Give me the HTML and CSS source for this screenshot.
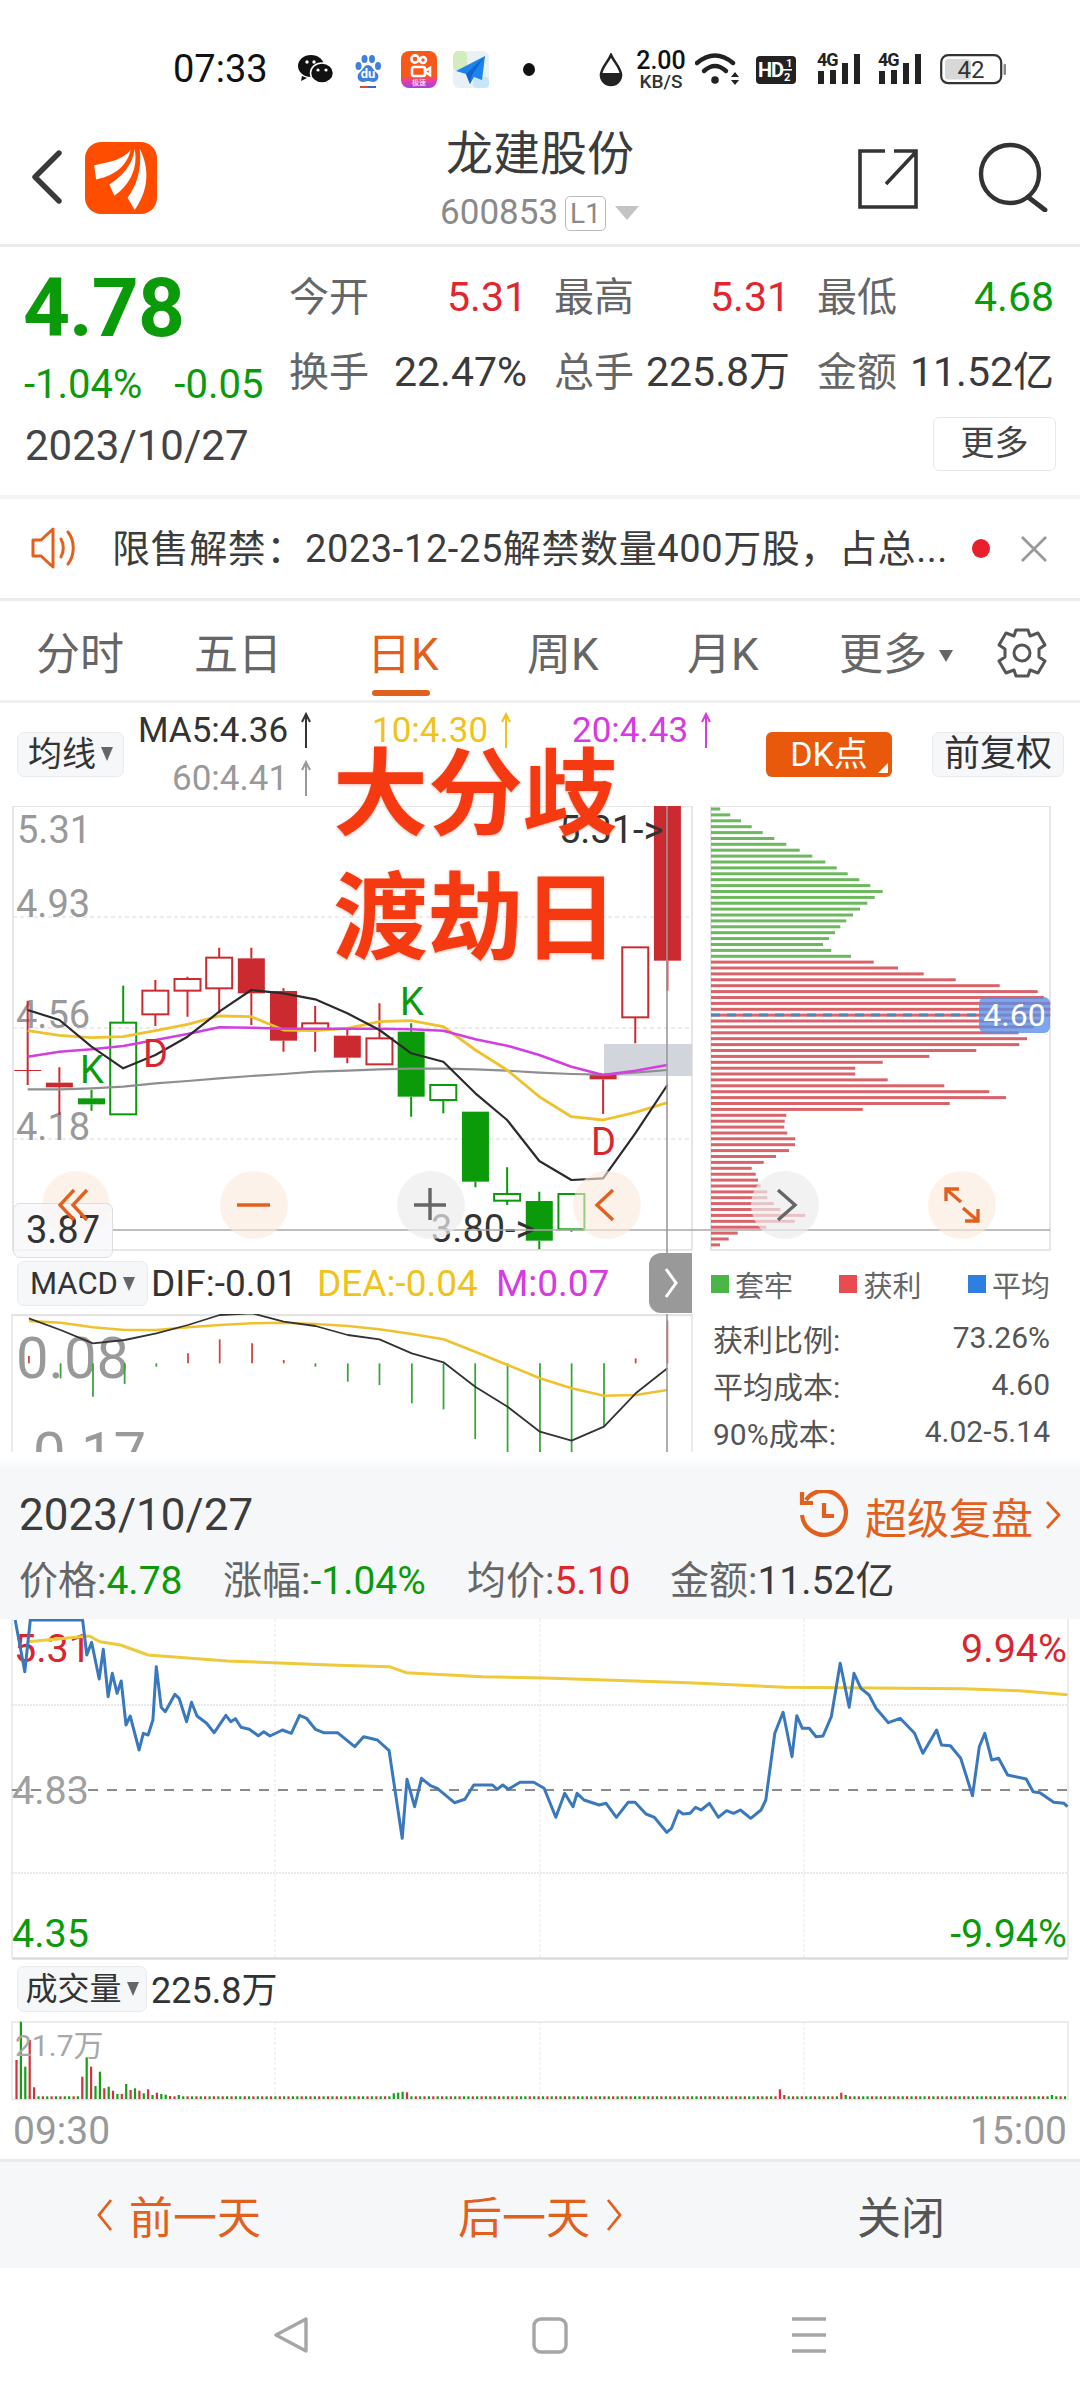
FILE: index.html
```html
<!DOCTYPE html>
<html lang="zh-CN">
<head>
  <meta charset="UTF-8">
  <title>龙建股份 600853</title>
  <link rel="stylesheet" href="styles.css">
</head>
<body>
<div id="page">

  <div class="status">
    <span class="st-time">07:33</span>
    <svg class="st-wechat" width="35" height="29" viewBox="0 0 35 29">
      <path d="M4 21l-1 5 6-3z M25 25l5 3-1-5z"/>
      <ellipse cx="13" cy="11" rx="13" ry="11"/>
      <ellipse cx="24" cy="18" rx="11.5" ry="10" stroke="#fff" stroke-width="1.5"/>
      <circle cx="9" cy="7" r="1.7" fill="#fff"/><circle cx="16" cy="7" r="1.7" fill="#fff"/>
      <circle cx="20" cy="15" r="1.6" fill="#fff"/><circle cx="28" cy="15" r="1.6" fill="#fff"/>
    </svg>
    <svg class="st-baidu" width="26" height="34" viewBox="0 0 26 34">
      <g fill="#3f7fdd">
        <ellipse cx="3.5" cy="11" rx="3" ry="4"/><ellipse cx="9.5" cy="4" rx="3" ry="4"/>
        <ellipse cx="17" cy="4" rx="3" ry="4"/><ellipse cx="23" cy="11" rx="3" ry="4"/>
        <path d="M13 10c4 0 5 5 9 8 3 3 1 9-4 9-2 0-3-1-5-1s-3 1-5 1c-5 0-7-6-4-9 4-3 5-8 9-8z"/>
      </g>
      <text x="13" y="23" class="ic-du">du</text>
      <rect x="5" y="31" width="8" height="2" fill="#d8483c"/><rect x="13" y="31" width="8" height="2" fill="#3a66c8"/>
    </svg>
    <svg class="st-app" width="36" height="37" viewBox="0 0 36 37">
      <defs><linearGradient id="appGrad" x1="0" y1="0" x2="0" y2="1">
        <stop offset=".68" stop-color="#f9581b"/><stop offset=".8" stop-color="#e83fa0"/><stop offset="1" stop-color="#9a45e8"/>
      </linearGradient></defs>
      <rect width="36" height="37" rx="8" fill="url(#appGrad)"/>
      <g fill="none" stroke="#fff" stroke-width="2.6">
        <circle cx="14" cy="8" r="3.6"/><circle cx="22" cy="9" r="3"/>
        <rect x="11" y="16" width="13" height="9" rx="2"/>
        <path d="M24 20l5-3v7l-5-3"/>
      </g>
      <text x="18" y="34" class="ic-app">极速</text>
    </svg>
    <svg class="st-send" width="36" height="37" viewBox="0 0 36 37">
      <rect width="36" height="37" rx="6" fill="#eaf1f6"/>
      <rect width="14" height="20" rx="5" fill="#d3ecbd"/>
      <rect x="20" y="26" width="16" height="11" rx="4" fill="#c5e6f8"/>
      <path d="M32 5L3 20l10 3 4 10 4-7 8 3z" fill="#1d83ee"/>
      <path d="M32 5L13 23l4 10 2-9z" fill="#0f67cf"/>
    </svg>
    <span class="st-dot"></span>
    <svg class="st-drop" width="24" height="34" viewBox="0 0 24 34">
      <path d="M12 2C9 9 2 15 2 22a10 10 0 0 0 20 0C22 15 15 9 12 2z" fill="none" stroke="#222" stroke-width="2.6"/>
      <path d="M2 20h20v2a10 10 0 0 1-20 0z" fill="#222"/>
    </svg>
    <div class="st-speed"><span>2.00</span><small>KB/S</small></div>
    <svg class="st-wifi" width="46" height="35" viewBox="0 0 46 35">
      <g fill="none" stroke="#222" stroke-width="4.4" stroke-linecap="round">
        <path d="M2 11Q20-4 38 11"/><path d="M9 19Q20 9 31 19"/>
      </g>
      <circle cx="20" cy="28" r="3.8" fill="#222"/>
      <path d="M40 20l-4 5h8zM36 28h8l-4 5z" fill="#222"/>
    </svg>
    <svg class="st-hd" width="40" height="28" viewBox="0 0 40 28">
      <rect width="40" height="28" rx="4" fill="#222"/>
      <text x="2" y="21" class="ic-hd">HD</text>
      <text x="30" y="11" class="ic-hd-s">1</text>
      <rect x="27" y="13" width="9" height="1.6" fill="#fff"/>
      <text x="28" y="25" class="ic-hd-s">2</text>
    </svg>
    <svg class="st-net" width="44" height="38" viewBox="0 -6 44 38">
      <text x="0" y="13" class="ic-4g">4G</text>
      <rect x="1" y="18" width="6" height="13"/><rect x="13" y="17" width="6" height="14"/>
      <rect x="25" y="10" width="6" height="21"/><rect x="37" y="1" width="6" height="30"/>
    </svg>
    <svg class="st-net st-net2" width="44" height="38" viewBox="0 -6 44 38">
      <text x="0" y="13" class="ic-4g">4G</text>
      <rect x="1" y="18" width="6" height="13"/><rect x="13" y="17" width="6" height="14"/>
      <rect x="25" y="10" width="6" height="21"/><rect x="37" y="1" width="6" height="30"/>
    </svg>
    <svg class="st-batt" width="66" height="31" viewBox="0 0 66 31">
      <rect x="1.2" y="1.2" width="60" height="28" rx="7" fill="none" stroke="#333" stroke-width="2.2"/>
      <rect x="5" y="5" width="26" height="20.5" rx="3.5" fill="#d8d8d8"/>
      <rect x="63.5" y="10" width="2.5" height="11" rx="1" fill="#888"/>
      <text x="31" y="24" class="ic-batt">42</text>
    </svg>
  </div>

  <header class="head">
    <svg class="back" width="32" height="54" viewBox="0 0 32 54">
      <path d="M28 3L4 27l24 24" fill="none" stroke="#3a3a3a" stroke-width="5.4" stroke-linecap="round" stroke-linejoin="round"/>
    </svg>
    <svg class="logo" width="72" height="72" viewBox="0 0 71 71">
      <rect width="71" height="71" rx="16" fill="#ff4d00"/>
      <path d="M45 8C38 17 25 20 9 23l2 14c15-3 30-11 34-29z M49 7c-2 15-11 26-25 35l5 11C42 44 53 28 49 7z M54 7c2 18-2 35-12 48l7 12C60 52 66 30 54 7z" fill="#fff"/>
    </svg>
    <div class="head-title">
      <div class="stock-name">龙建股份</div>
      <div class="stock-code">600853<span class="lv">L1</span><i class="tri tri-code"></i></div>
    </div>
    <svg class="share" width="60" height="60" viewBox="0 0 60 60">
      <path d="M27 2H2v56h56V23" fill="none" stroke="#333" stroke-width="3.6"/>
      <path d="M28 35L57 4M36 2h22v21" fill="none" stroke="#333" stroke-width="3.6"/>
    </svg>
    <svg class="search" width="70" height="70" viewBox="0 0 70 70">
      <circle cx="32" cy="32" r="29" fill="none" stroke="#333" stroke-width="4.4"/>
      <path d="M50 55l17 13" stroke="#333" stroke-width="4.8" stroke-linecap="round"/>
    </svg>
  </header>

  <section class="quote">
    <div class="quote-left">
      <div class="price green">4.78</div>
      <div class="change green"><span>-1.04%</span><span>-0.05</span></div>
      <div class="q-date">2023/10/27</div>
    </div>
    <div class="quote-right">
      <div class="stat-grid">
        <div class="cell"><span class="lab">今开</span><span class="red">5.31</span></div>
        <div class="cell"><span class="lab">最高</span><span class="red">5.31</span></div>
        <div class="cell"><span class="lab">最低</span><span class="green">4.68</span></div>
        <div class="cell"><span class="lab">换手</span><span class="val">22.47%</span></div>
        <div class="cell"><span class="lab">总手</span><span class="val">225.8万</span></div>
        <div class="cell"><span class="lab">金额</span><span class="val">11.52亿</span></div>
      </div>
      <div class="more-btn">更多</div>
    </div>
  </section>

  <section class="notice">
    <svg class="speaker" width="48" height="42" viewBox="0 0 48 42">
      <g fill="none" stroke="#e2601e" stroke-width="3" stroke-linejoin="round" stroke-linecap="round">
        <path d="M2 13h8L22 2v38L10 29H2z"/>
        <path d="M30 12c3 5 3 13 0 18"/>
        <path d="M37 5c7 9 7 23 0 32"/>
      </g>
    </svg>
    <div class="notice-text">限售解禁：2023-12-25解禁数量400万股，占总...</div>
    <span class="notice-dot"></span>
    <svg class="notice-x" width="28" height="28" viewBox="0 0 28 28">
      <path d="M2 2l24 24M26 2L2 26" stroke="#9a9a9a" stroke-width="2.8"/>
    </svg>
  </section>

  <nav class="tabs">
    <div class="tab">分时</div>
    <div class="tab">五日</div>
    <div class="tab on">日K</div>
    <div class="tab">周K</div>
    <div class="tab">月K</div>
    <div class="tab">更多<i class="tri tri-tab"></i></div>
    <svg class="gear" width="50" height="50" viewBox="0 0 50 50">
      <path d="M19 2h12l2 6 8-3 7 12-6 4v8l6 4-7 12-8-3-2 6H19l-2-6-8 3-7-12 6-4v-8l-6-4L9 5l8 3z" fill="none" stroke="#555" stroke-width="3" stroke-linejoin="round"/>
      <circle cx="25" cy="25" r="8" fill="none" stroke="#555" stroke-width="3"/>
    </svg>
  </nav>

  <div class="kbar">
    <div class="tool-btn btn-ma">均线<i class="tri tri-btn"></i></div>
    <div class="ma-grid">
      <div class="ma c-dark">MA5:4.36<svg class="up" width="12" height="36" viewBox="0 0 12 36"><path d="M6 36V3M2 10l4-8 4 8" fill="none" stroke="currentColor" stroke-width="2"/></svg></div>
      <div class="ma c-yellow">10:4.30<svg class="up" width="12" height="36" viewBox="0 0 12 36"><path d="M6 36V3M2 10l4-8 4 8" fill="none" stroke="currentColor" stroke-width="2"/></svg></div>
      <div class="ma c-pink">20:4.43<svg class="up" width="12" height="36" viewBox="0 0 12 36"><path d="M6 36V3M2 10l4-8 4 8" fill="none" stroke="currentColor" stroke-width="2"/></svg></div>
      <div class="ma c-gray ma-60">60:4.41<svg class="up" width="12" height="36" viewBox="0 0 12 36"><path d="M6 36V3M2 10l4-8 4 8" fill="none" stroke="currentColor" stroke-width="2"/></svg></div>
    </div>
    <div class="dk-btn">DK点<i class="dk-corner"></i></div>
    <div class="tool-btn btn-fq">前复权</div>
  </div>

  <section class="kline">
    <svg id="klineSvg" width="1080" height="447" viewBox="0 806 1080 447">
      <g class="frame">
        <rect x="13" y="806" width="679" height="444"/>
        <rect x="711" y="806" width="339" height="444"/>
      </g>
      <g class="dash-grid">
        <path d="M13 917H692M13 1028H692M13 1139H692"/>
      </g>
      <rect x="604" y="1044" width="88" height="32" fill="#d2d6dc"/>
      <g class="axis-txt">
        <text x="17" y="843">5.31</text>
        <text x="16" y="917">4.93</text>
        <text x="16" y="1028">4.56</text>
        <text x="16" y="1140">4.18</text>
      </g>
      <g id="profile"></g>
      <g id="candles"></g>
      <g id="maLines"></g>
      <g class="kd green-f">
        <text x="80" y="1083">K</text>
        <text x="400" y="1015">K</text>
      </g>
      <g class="kd red-f">
        <text x="143" y="1067">D</text>
        <text x="591" y="1155">D</text>
      </g>
      <text x="559" y="843" class="peak">5.31-&gt;</text>
      <text x="431" y="1242" class="peak">3.80-&gt;</text>
      <path d="M113 1230H1050" stroke="#a8a8a8" stroke-width="1.6"/>
      <path d="M667 806V1253" stroke="#999" stroke-width="1.6"/>
      <rect x="979" y="997" width="71" height="36" rx="6" fill="#5a8ee6" fill-opacity=".78"/>
      <text x="1014.5" y="1026" class="avg-tag">4.60</text>
      <g>
        <circle cx="76" cy="1205" r="34" class="ctl-o"/>
        <circle cx="254" cy="1205" r="34" class="ctl-o"/>
        <circle cx="431" cy="1205" r="34" class="ctl-g"/>
        <circle cx="607" cy="1205" r="34" class="ctl-o"/>
        <circle cx="785" cy="1205" r="34" class="ctl-g"/>
        <circle cx="962" cy="1205" r="34" class="ctl-o"/>
        <path d="M237 1205h33" class="ctl-i"/>
        <path d="M414 1205h32M430 1188v32" class="ctl-i gr"/>
        <path d="M613 1190l-16 15 16 15" class="ctl-i"/>
        <path d="M778 1190l17 15-17 15" class="ctl-i gr"/>
        <path d="M946 1201v-12h13M946 1189l15 13M978 1209v12h-13M978 1221l-15-13" class="ctl-i"/>
      </g>
    </svg>
    <div class="cross-tag">3.87</div>
    <svg class="rew-icon" width="32" height="36" viewBox="0 0 32 36">
      <path d="M16 3L2 18l14 15M29 3L15 18l14 15" class="ctl-i"/>
    </svg>
    <div class="big-title">大分歧<br>渡劫日</div>
  </section>

  <div class="macd-bar">
    <div class="macd-left">
      <div class="tool-btn btn-macd">MACD<i class="tri tri-btn"></i></div>
      <span class="m-val m-dif c-dark">DIF:-0.01</span>
      <span class="m-val m-dea c-yellow">DEA:-0.04</span>
      <span class="m-val c-pink">M:0.07</span>
    </div>
    <div class="legend">
      <span class="lg"><i class="sq sq-g"></i>套牢</span>
      <span class="lg"><i class="sq sq-r"></i>获利</span>
      <span class="lg"><i class="sq sq-b"></i>平均</span>
    </div>
    <div class="side-tab">
      <svg width="16" height="34" viewBox="0 0 16 34"><path d="M3 3l10 14L3 31" fill="none" stroke="#fff" stroke-width="3"/></svg>
    </div>
  </div>

  <div class="macd-body">
    <svg id="macdSvg" width="700" height="138" viewBox="0 1314 700 138">
      <path d="M12 1314V1452M692 1314V1452" stroke="#e4e4e4" stroke-width="1.5"/>
      <path d="M12 1315H692" stroke="#e4e4e4" stroke-width="2.5"/>
      <text x="16" y="1378" class="macd-txt">0.08</text>
      <text x="33" y="1473" class="macd-txt">0.17</text>
      <g id="macdPlot"></g>
      <path d="M667 1314V1452" stroke="#999" stroke-width="1.6"/>
    </svg>
    <div class="cost">
      <div class="cost-row"><span>获利比例:</span><span>73.26%</span></div>
      <div class="cost-row"><span>平均成本:</span><span>4.60</span></div>
      <div class="cost-row"><span>90%成本:</span><span>4.02-5.14</span></div>
    </div>
  </div>

  <section class="panel">
    <div class="panel-top">
      <div class="panel-date">2023/10/27</div>
      <div class="replay">
        <svg width="50" height="50" viewBox="0 0 50 50">
          <g fill="none" stroke="#e2601e" stroke-width="4.2">
            <path d="M7 10A22 22 0 1 1 3 25"/>
            <path d="M3 2v11h11"/>
            <path d="M25 13v13h10"/>
          </g>
        </svg>
        <span>超级复盘</span>
        <svg class="replay-arrow" width="18" height="30" viewBox="0 0 18 30"><path d="M3 2l12 13L3 28" fill="none" stroke="#e2601e" stroke-width="2.8"/></svg>
      </div>
    </div>
    <div class="panel-row">
      <span>价格:<b class="green">4.78</b></span>
      <span>涨幅:<b class="green">-1.04%</b></span>
      <span>均价:<b class="red">5.10</b></span>
      <span>金额:<b class="val">11.52亿</b></span>
    </div>
  </section>

  <svg id="dayChart" class="day-chart" width="1080" height="341" viewBox="0 1619 1080 341">
    <path d="M12 1619V1958M1068 1619V1958" stroke="#e6e6e6" stroke-width="1.5"/>
    <path d="M12 1958.5H1068" stroke="#dcdcdc" stroke-width="2.5"/>
    <path d="M12 1705H1068M12 1873H1068" class="dot-h"/>
    <path d="M275 1619V1958M540 1619V1958M804 1619V1958" class="dot-v"/>
    <path d="M12 1790H1068" stroke="#8a8a8a" stroke-width="1.8" stroke-dasharray="10 9"/>
    <g class="day-txt">
      <text x="14" y="1662" class="red-f">5.31</text>
      <text x="1067" y="1662" class="red-f end">9.94%</text>
      <text x="12" y="1804" class="gray-f">4.83</text>
      <text x="12" y="1947" class="green-f">4.35</text>
      <text x="1067" y="1947" class="green-f end">-9.94%</text>
    </g>
    <g id="dayLines"></g>
  </svg>

  <div class="vol-bar">
    <div class="tool-btn btn-vol">成交量<i class="tri tri-btn"></i></div>
    <span class="m-val vol-val c-dark">225.8万</span>
  </div>

  <svg id="volChart" class="vol-chart" width="1080" height="85" viewBox="0 2018 1080 85">
    <rect x="12" y="2022" width="1056" height="77.5" fill="none" stroke="#e6e6e6" stroke-width="1.5"/>
    <path d="M275 2022V2099M540 2022V2099M804 2022V2099" class="dot-v"/>
    <g id="volBars"></g>
    <text x="15" y="2056" class="vol-txt">21.7万</text>
  </svg>

  <div class="time-row"><span>09:30</span><span>15:00</span></div>

  <footer class="foot">
    <div class="foot-btn f-prev">
      <svg width="18" height="34" viewBox="0 0 18 34"><path d="M15 2L3 17l12 15" fill="none" stroke="#e2601e" stroke-width="2.8"/></svg>
      <span>前一天</span>
    </div>
    <div class="foot-btn f-next">
      <span>后一天</span>
      <svg width="18" height="34" viewBox="0 0 18 34"><path d="M3 2l12 15L3 32" fill="none" stroke="#e2601e" stroke-width="2.8"/></svg>
    </div>
    <div class="foot-btn f-close">关闭</div>
  </footer>

  <div class="navbar">
    <svg width="36" height="36" viewBox="0 0 36 36"><path d="M33 2v32L3 18z" fill="none" stroke="#a6a6a6" stroke-width="3.4" stroke-linejoin="round"/></svg>
    <svg width="36" height="37" viewBox="0 0 36 37"><rect x="2" y="2" width="32" height="33" rx="7" fill="none" stroke="#a6a6a6" stroke-width="3.4"/></svg>
    <svg width="36" height="36" viewBox="0 0 36 36"><path d="M1 2h34M1 18h34M1 34h34" stroke="#a6a6a6" stroke-width="3.6"/></svg>
  </div>
</div>
<script src="chart.js"></script>
</body>
</html>
```

FILE: styles.css
```css
* { margin: 0; padding: 0; box-sizing: border-box; }
html, body { width: 1080px; height: 2400px; overflow: hidden; background: #fff; }
body { font-family: Roboto, "Noto Sans CJK SC", sans-serif; color: #333; }
#page { width: 1080px; height: 2400px; display: flex; flex-direction: column; }
svg { display: block; flex: none; }

.green { color: #0a9a0a; }
.red { color: #e0262e; }
.val { color: #3a3a3a; }
.c-dark { color: #333; }
.c-gray { color: #999; }
.c-yellow { color: #f0c31c; }
.c-pink { color: #d63ae0; }
.green-f { fill: #0a9a0a; }
.red-f { fill: #d8262e; }
.gray-f { fill: #a0a0a0; }

.tri { display: inline-block; width: 0; height: 0; border-style: solid; border-color: #888 transparent transparent; }
.tri-code { border-width: 14px 12px 0; border-top-color: #c4c4c4; margin-left: 9px; }
.tri-tab { border-width: 12px 7px 0; border-top-color: #666; margin-left: 12px; vertical-align: 8px; }
.tri-btn { border-width: 14px 6px 0; border-top-color: #666; margin-left: 5px; }

/* status bar */
.status { height: 115px; padding: 46px 0 0 173px; display: flex; align-items: flex-start; flex: none; fill: #111; }
.st-time { font-size: 38px; line-height: 46px; color: #111; width: 94px; white-space: nowrap; }
.st-wechat { margin: 9px 0 0 31px; }
.st-baidu { margin: 9px 0 0 22px; }
.st-app { margin: 5px 0 0 20px; }
.st-send { margin: 5px 0 0 16px; }
.st-dot { width: 12px; height: 13px; border-radius: 50%; background: #111; margin: 17px 0 0 34px; }
.st-drop { margin: 7px 0 0 64px; }
.st-speed { margin: 4px 0 0 14px; width: 48px; display: flex; flex-direction: column; align-items: center; color: #111; }
.st-speed span { font-size: 25px; line-height: 22px; font-weight: 500; }
.st-speed small { font-size: 19px; line-height: 17px; margin-top: 1px; font-weight: 500; color: #333; }
.st-wifi { margin: 6px 0 0 10px; }
.st-hd { margin: 10px 0 0 15px; }
.st-net { margin: 1px 0 0 21px; fill: #222; }
.st-net2 { margin-left: 17px; }
.st-batt { margin: 8px 0 0 18px; }
.ic-du { font: 700 13px Roboto, sans-serif; fill: #fff; text-anchor: middle; }
.ic-app { font: 7px "Noto Sans CJK SC", sans-serif; fill: #fff; text-anchor: middle; }
.ic-hd { font: 700 20px Roboto, sans-serif; fill: #fff; letter-spacing: -1px; }
.ic-hd-s { font: 700 11px Roboto, sans-serif; fill: #fff; }
.ic-4g { font: 700 18px Roboto, sans-serif; fill: #222; letter-spacing: -1px; }
.ic-batt { font: 24px Roboto, sans-serif; fill: #333; text-anchor: middle; }

/* header */
.head { height: 132px; border-bottom: 3px solid #eaeaea; display: flex; flex: none; position: relative; padding: 27px 0 0 31px; }
.back { margin-top: 8px; }
.logo { margin-left: 22px; }
.head-title { position: absolute; left: 0; right: 0; top: 9px; text-align: center; }
.stock-name { font-size: 47px; line-height: 60px; color: #3c3c3c; }
.stock-code { font-size: 35px; line-height: 40px; color: #8a8a8a; margin-top: 9px; display: flex; align-items: center; justify-content: center; padding-right: 1px; }
.lv { border: 1.5px solid #bbb; border-radius: 5px; font-size: 28px; line-height: 33px; padding: 0 4px; margin-left: 7px; color: #8a8a8a; }
.share { margin: 7px 0 0 701px; position: relative; }
.search { margin: 0 0 0 60px; position: relative; }

/* quote */
.quote { height: 248px; display: flex; flex: none; padding-left: 23px; }
.quote-left { width: 266px; flex: none; }
.price { font-size: 82px; line-height: 82px; font-weight: 700; margin-top: 20px; letter-spacing: -1px; }
.change { font-size: 40px; line-height: 40px; display: flex; gap: 32px; margin: 16px 0 0 1px; white-space: nowrap; }
.q-date { font-size: 42px; line-height: 44px; color: #444; margin: 19px 0 0 2px; }
.quote-right { width: 765px; flex: none; }
.stat-grid { display: grid; grid-template-columns: 238px 236px 237px; column-gap: 27px; row-gap: 32px; margin-top: 29px; font-size: 41px; line-height: 43px; }
.cell { display: flex; justify-content: space-between; white-space: nowrap; }
.lab { font-size: 40px; color: #666; }
.more-btn { width: 123px; height: 54px; margin: 23px 0 0 644px; border: 1.5px solid #e8e8e8; border-radius: 6px; font-size: 34px; line-height: 50px; text-align: center; color: #444; }

/* notice */
.notice { height: 106px; border-top: 4px solid #f4f4f4; border-bottom: 3px solid #ebebeb; display: flex; align-items: center; flex: none; padding-left: 31px; }
.notice-text { width: 835px; margin-left: 33px; font-size: 38px; line-height: 50px; letter-spacing: .6px; color: #3c3c3c; white-space: nowrap; overflow: hidden; flex: none; }
.speaker { margin-top: -2px; }
.notice-dot { width: 18px; height: 19px; border-radius: 50%; background: #e8202c; margin-left: 25px; flex: none; }
.notice-x { margin-left: 30px; }

/* period tabs */
.tabs { height: 102px; display: grid; grid-template-columns: 158px 173px 160px 160px 152px 158px 50px; padding: 28px 0 0 36px; flex: none; font-size: 44px; color: #666; border-bottom: 3px solid #f0f0f0; }
.tab { line-height: 52px; position: relative; white-space: nowrap; }
.tab.on { color: #e2601e; }
.tab.on::after { content: ""; position: absolute; left: 5px; top: 61px; width: 58px; height: 6px; border-radius: 3px; background: #e2601e; }
.gear { margin-top: -1px; }

/* kline toolbar */
.kbar { height: 103px; padding-top: 3px; padding-bottom: 4px; display: flex; align-items: center; flex: none; position: relative; }
.tool-btn { background: #f6f7f9; border: 1.5px solid #e8eaee; border-radius: 7px; height: 45px; font-size: 32px; line-height: 41px; color: #333; display: flex; align-items: center; justify-content: center; white-space: nowrap; flex: none; }
.btn-ma { width: 107px; margin-left: 17px; font-size: 34px; }
.ma-grid { display: grid; grid-template-columns: 234px 200px 160px; grid-auto-rows: 48px; margin-left: 14px; width: 628px; flex: none; font-size: 35px; }
.ma { display: flex; align-items: center; white-space: nowrap; }
.ma-60 { padding-left: 34px; }
.up { margin-left: 12px; }
.dk-btn { width: 126px; height: 45px; background: #e8590c; color: #fff; border-radius: 6px; font-size: 34px; line-height: 44px; text-align: center; position: relative; flex: none; }
.dk-corner { position: absolute; right: 4px; bottom: 4px; border-style: solid; border-width: 0 0 10px 10px; border-color: transparent transparent #fff; }
.btn-fq { width: 132px; margin-left: 40px; font-size: 36px; }

/* kline chart */
.kline { height: 447px; position: relative; flex: none; }
.frame rect { fill: none; stroke: #e0e0e0; stroke-width: 1.6; }
.dash-grid path { stroke: #e6e6e6; stroke-width: 1.5; stroke-dasharray: 4 3; fill: none; }
.axis-txt text { font-size: 38px; fill: #999; }
.kd text { font-size: 38px; }
.peak { font-size: 38px; fill: #333; }
.avg-tag { font-size: 32px; fill: #fff; text-anchor: middle; }
.ctl-o { fill: #fbe9dc; fill-opacity: .6; }
.ctl-g { fill: #ececec; fill-opacity: .7; }
.ctl-i { fill: none; stroke: #e2601e; stroke-width: 3.4; }
.ctl-i.gr { stroke: #666; }
.cross-tag { position: absolute; left: 13px; top: 397px; width: 100px; height: 55px; background: rgba(246,247,249,.72); border: 1.5px solid #ddd; border-radius: 7px; font-size: 38px; line-height: 52px; text-align: center; color: #333; }
.rew-icon { position: absolute; left: 58px; top: 381px; }
.big-title { position: absolute; left: 333px; top: -81px; font-family: "Noto Sans CJK SC", sans-serif; font-weight: 700; font-size: 95px; line-height: 124px; color: #f53a12; white-space: nowrap; text-shadow: 0 1px 3px rgba(200,60,20,.35); }

/* macd */
.macd-bar { height: 61px; display: flex; position: relative; flex: none; }
.macd-left { width: 711px; display: flex; align-items: center; padding: 0 0 0 17px; flex: none; }
.btn-macd { width: 131px; font-size: 31px; }
.m-val { font-size: 37px; line-height: 44px; white-space: nowrap; }
.macd-left .m-val { margin-left: 3px; }
.m-dif { width: 163px; }
.m-dea { width: 176px; }
.legend { width: 339px; display: flex; justify-content: space-between; align-items: center; font-size: 29px; color: #666; }
.lg { display: flex; align-items: center; gap: 6px; white-space: nowrap; }
.sq { width: 18px; height: 18px; }
.sq-g { background: #4cb548; }
.sq-r { background: #e84b50; }
.sq-b { background: #2f7fe0; }
.side-tab { position: absolute; left: 649px; top: 0; width: 43px; height: 60px; background: #999; border-radius: 12px 0 0 12px; display: flex; align-items: center; justify-content: center; }
.macd-body { height: 142px; display: flex; flex: none; }
.macd-txt { font-size: 58px; fill: #999; }
.cost { width: 337px; margin-left: 13px; flex: none; }
.cost-row { height: 47px; display: flex; justify-content: space-between; align-items: center; font-size: 30px; color: #555; white-space: nowrap; }

/* lower panel */
.panel { height: 163px; flex: none; background: linear-gradient(#fff, #f6f7f9 14px); padding: 0 18px 0 19px; }
.panel-top { display: flex; justify-content: space-between; align-items: center; height: 76px; margin-top: 21px; }
.panel-date { font-size: 44px; color: #3c3c3c; }
.replay { display: flex; align-items: center; color: #e2601e; font-size: 42px; }
.replay span { margin-left: 16px; }
.replay-arrow { margin-left: 11px; }
.panel-row { display: flex; font-size: 39px; line-height: 44px; color: #666; margin-top: 6px; white-space: nowrap; }
.panel-row b { font-weight: 400; }
.panel-row span:nth-child(1) { width: 204px; }
.panel-row span:nth-child(2) { width: 244px; }
.panel-row span:nth-child(3) { width: 203px; }

.day-chart { flex: none; }
.dot-h { stroke: #e2e2e2; stroke-width: 1.5; stroke-dasharray: 2 1; fill: none; }
.dot-v { stroke: #ebebeb; stroke-width: 1.2; stroke-dasharray: 3 2; fill: none; }
.day-txt text { font-size: 39.5px; }
.day-txt .end { text-anchor: end; }

.vol-bar { height: 58px; display: flex; align-items: center; padding-left: 17px; flex: none; }
.btn-vol { width: 130px; height: 46px; font-size: 32px; margin-right: 4px; }
.vol-val { font-size: 36px; margin-top: 3px; }
.vol-chart { flex: none; }
.vol-txt { font-size: 30px; fill: #a8a8a8; }

.time-row { height: 56px; display: flex; justify-content: space-between; align-items: center; padding: 0 13px; font-size: 39px; color: #999; flex: none; }

.foot { height: 109px; background: #f6f7f9; border-top: 3px solid #eaeaea; display: flex; flex: none; font-size: 44px; color: #e2601e; }
.foot-btn { display: flex; align-items: center; gap: 15px; white-space: nowrap; }
.f-prev { margin-left: 96px; width: 362px; }
.f-next { width: 399px; }
.f-close { color: #555; }

.navbar { height: 132px; display: flex; flex: none; align-items: flex-start; padding: 49px 0 0 273px; gap: 223px; }
```

FILE: chart.js
```js
// trace units from the crops -> page pixels
function kx(z) { return z / 2.24; }
function ky(z) { return 780 + z / 3; }

function line(pts, color, width, fx, fy) {
  var d = pts.map(function (p) { return fx(p[0]).toFixed(1) + ',' + fy(p[1]).toFixed(1); }).join(' ');
  return '<polyline points="' + d + '" fill="none" stroke="' + color + '" stroke-width="' + width + '" stroke-linejoin="round"/>';
}

// candles: x, wick top, wick bottom, body top, body bottom, color, filled
var RED = '#cb2a30', GRN = '#0a9a0a';
var candles = [
  [62, 662, 915, 870, 873, RED, 1], [133, 862, 1005, 908, 922, RED, 1], [205, 930, 992, 955, 973, GRN, 1],
  [276, 617, 1003, 728, 1003, GRN, 0], [348, 600, 738, 632, 703, RED, 0], [420, 590, 710, 597, 632, RED, 0],
  [491, 503, 700, 533, 625, RED, 0], [563, 503, 735, 535, 640, RED, 1], [635, 625, 815, 633, 782, RED, 1],
  [706, 678, 815, 730, 748, RED, 0], [778, 745, 850, 767, 833, RED, 1], [850, 670, 855, 775, 853, RED, 0],
  [921, 730, 1010, 755, 950, GRN, 1], [993, 915, 1000, 915, 960, GRN, 0], [1065, 995, 1222, 995, 1205, GRN, 1],
  [1136, 1162, 1275, 1242, 1262, GRN, 0], [1208, 1235, 1408, 1263, 1382, GRN, 1], [1280, 1240, 1355, 1242, 1348, GRN, 0],
  [1351, 885, 1002, 885, 898, RED, 1], [1423, 502, 790, 502, 712, RED, 0], [1495, 78, 632, 78, 542, RED, 1]
];
var html = '';
candles.forEach(function (c) {
  var x = kx(c[0]), bodyTop = ky(c[3]), bodyBot = ky(c[4]);
  html += '<path d="M' + x + ' ' + ky(c[1]) + 'V' + bodyTop + 'M' + x + ' ' + bodyBot + 'V' + ky(c[2]) + '" stroke="' + c[5] + '" stroke-width="2"/>';
  if (c[6]) {
    html += '<rect x="' + (x - 13.5) + '" y="' + bodyTop + '" width="27" height="' + (bodyBot - bodyTop) + '" fill="' + c[5] + '"/>';
  } else {
    html += '<rect x="' + (x - 13) + '" y="' + bodyTop + '" width="26" height="' + (bodyBot - bodyTop) + '" fill="none" stroke="' + c[5] + '" stroke-width="2"/>';
  }
});
document.getElementById('candles').innerHTML = html;

var xs = [62, 133, 205, 276, 348, 420, 491, 563, 635, 706, 778, 850, 921, 993, 1065, 1136, 1208, 1280, 1351, 1423, 1495];
function zip(ys) { return ys.map(function (y, i) { return [xs[i], y]; }); }
document.getElementById('maLines').innerHTML =
  line(zip([928, 928, 925, 920, 910, 903, 895, 888, 882, 875, 872, 868, 866, 866, 868, 872, 878, 882, 884, 878, 870]), '#8e8e8e', 2.2, kx, ky) +
  line(zip([752, 766, 773, 770, 752, 733, 708, 710, 750, 752, 745, 725, 722, 740, 810, 870, 950, 1010, 1020, 997, 968]), '#eec22e', 2.8, kx, ky) +
  line(zip([830, 815, 808, 798, 780, 762, 742, 743, 746, 746, 746, 746, 748, 752, 778, 797, 825, 860, 885, 872, 855]), '#d23fe0', 2.6, kx, ky) +
  line(zip([690, 720, 800, 865, 825, 770, 695, 630, 640, 658, 700, 750, 820, 845, 940, 1020, 1143, 1200, 1195, 1060, 915]), '#2b2b2b', 2.2, kx, ky);

// chip distribution, right end of each row
var rows = [240, 270, 302, 334, 367, 402, 438, 478, 516, 555, 589, 622, 657, 690, 727, 703, 681, 659, 638, 618, 600, 584, 566, 548, 573, 632,
  700, 773, 850, 946, 1078, 1192, 1210, 1230, 1230, 1230, 1200, 1180, 1135, 1160, 1137, 1008, 867, 727, 645, 645, 742, 912, 1047, 1097, 928, 667,
  438, 433, 432, 441, 465, 464, 446, 407, 370, 334, 346, 353, 361, 381, 381, 400, 420, 495, 463, 378, 292, 265, 239];
html = '';
rows.forEach(function (r, i) {
  var y = 780 + (87 + i * 17.67) / 3;
  var w = (r - 212) / 3;
  html += '<rect x="711" y="' + (y - 1.5).toFixed(1) + '" width="' + w.toFixed(1) + '" height="3" fill="' + (i < 26 ? '#6cb85c' : '#d9636a') + '"/>';
});
html += '<path d="M711 1015H979" stroke="#4a86c8" stroke-width="3" stroke-dasharray="9 7"/>';
document.getElementById('profile').innerHTML = html;

// macd
function mx(z) { return z / 1.452; }
function my(z) { return 1250 + z / 3; }
var macdX = [42, 88, 135, 181, 227, 273, 319, 366, 412, 458, 505, 551, 598, 644, 690, 737, 784, 830, 877, 923, 969];
var macdEnd = [318, 385, 440, 402, 350, 310, 268, 280, 330, 350, 395, 405, 460, 478, 567, 620, 620, 620, 530, 325, 212];
html = '';
macdX.forEach(function (x, i) {
  var e = macdEnd[i];
  html += '<path d="M' + mx(x) + ' ' + my(340) + 'V' + my(e) + '" stroke="' + (e < 340 ? '#d0444a' : '#3ea23e') + '" stroke-width="1.8"/>';
});
function zipM(ys) { return ys.map(function (y, i) { return [macdX[i], y]; }); }
html += line(zipM([213, 218, 232, 240, 240, 232, 225, 220, 218, 222, 228, 238, 252, 268, 305, 345, 385, 415, 437, 435, 420]), '#eec22e', 2.6, mx, my);
html += line(zipM([205, 240, 280, 270, 250, 225, 195, 190, 215, 228, 255, 268, 310, 337, 410, 470, 545, 572, 530, 430, 355]), '#333', 1.8, mx, my);
document.getElementById('macdPlot').innerHTML = html;

// intraday
function dx(z) { return z / 1.452; }
function dy(z) { return 1600 + z / 3; }
var avg = [[40, 125], [130, 108], [145, 125], [175, 135], [215, 165], [330, 183], [480, 195], [565, 200], [590, 218], [700, 230], [790, 234], [1000, 248], [1140, 262], [1400, 266], [1480, 272], [1550, 284]];
var price = [[22, 60], [36, 215], [44, 60], [120, 60], [126, 165], [133, 127], [144, 237], [150, 148], [157, 290], [163, 220], [170, 280], [176, 243], [183, 375], [189, 348], [202, 450], [208, 400], [215, 405], [222, 360], [227, 200], [234, 322], [240, 335], [254, 283], [260, 295], [271, 365], [278, 307], [286, 348], [300, 370], [311, 398], [328, 346], [335, 365], [342, 356], [350, 382], [362, 388], [375, 407], [383, 395], [392, 408], [410, 390], [423, 400], [435, 346], [445, 355], [458, 388], [470, 398], [490, 398], [515, 440], [528, 410], [548, 420], [565, 452], [584, 715], [591, 538], [602, 620], [612, 535], [625, 557], [635, 565], [660, 608], [675, 598], [688, 555], [715, 555], [722, 568], [730, 555], [738, 568], [755, 547], [775, 547], [790, 565], [807, 652], [820, 580], [832, 620], [838, 580], [848, 600], [870, 615], [880, 610], [895, 652], [912, 607], [922, 607], [938, 642], [950, 652], [968, 697], [975, 685], [985, 632], [992, 642], [1002, 640], [1010, 622], [1018, 630], [1030, 610], [1043, 652], [1055, 632], [1065, 640], [1075, 630], [1090, 655], [1105, 630], [1112, 600], [1125, 400], [1137, 337], [1150, 470], [1157, 347], [1165, 385], [1175, 385], [1185, 410], [1195, 408], [1207, 350], [1220, 190], [1233, 322], [1240, 220], [1250, 265], [1262, 285], [1272, 325], [1290, 368], [1307, 355], [1328, 400], [1340, 460], [1360, 390], [1367, 435], [1380, 437], [1395, 475], [1412, 587], [1422, 440], [1430, 400], [1440, 480], [1450, 475], [1463, 525], [1490, 537], [1500, 575], [1510, 578], [1530, 607], [1545, 610], [1550, 620]];
document.getElementById('dayLines').innerHTML = line(avg, '#eec93a', 3, dx, dy) + line(price, '#3a78bd', 3, dx, dy);

// volume: [trace x, bar top, up]
var tall = [[24, 240, 1], [30, 125, 0], [36, 260, 0], [42, 180, 1], [49, 322, 1], [118, 290, 1], [125, 232, 0], [131, 260, 1], [138, 318, 0], [144, 275, 0], [150, 325, 1], [157, 320, 0], [163, 332, 1], [169, 342, 0], [176, 342, 1], [182, 312, 0], [189, 330, 1], [195, 325, 0], [201, 332, 1], [208, 340, 0], [214, 328, 1], [220, 345, 0], [227, 338, 1], [233, 342, 0], [240, 344, 0], [246, 348, 1], [259, 345, 0], [570, 340, 0], [576, 338, 0], [582, 335, 0], [589, 337, 1], [1131, 328, 1], [1137, 345, 1], [1220, 338, 1], [1226, 345, 0], [1530, 345, 0], [1550, 342, 0]];
var byIdx = {};
tall.forEach(function (t) { byIdx[Math.round((t[0] - 24) / 6.37)] = t; });
html = '';
for (var n = 0; n < 240; n++) {
  var zx = 24 + n * 6.37;
  var hit = byIdx[n];
  var barTop = hit ? hit[1] : 349;
  var isUp = hit ? hit[2] : (n * 7 % 13 < 6);
  var barY = 1980 + barTop / 3;
  html += '<rect x="' + (zx / 1.452 - 1.1).toFixed(1) + '" y="' + barY.toFixed(1) + '" width="2.2" height="' + (2099 - barY).toFixed(1) + '" fill="' + (isUp ? '#d8303a' : '#12a012') + '"/>';
}
document.getElementById('volBars').innerHTML = html;
```
